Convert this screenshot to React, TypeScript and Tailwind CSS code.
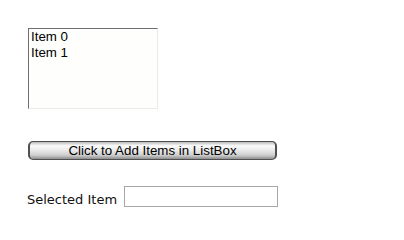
import { useState } from 'react'

const items = ['Item 0', 'Item 1']

function App() {
  const [selected, setSelected] = useState('')

  return (
    <div className="min-h-screen bg-white pl-[27px] pt-[28px] text-black">
      <div
        className="ml-px w-[130px] h-[81px] bg-[#fefefc] border-t border-l border-t-[#6e6e6e] border-l-[#6e6e6e] border-r border-b border-r-[#ecebe6] border-b-[#ecebe6] pl-[2px] font-['Liberation_Sans',Arial,sans-serif] text-[13.33px] leading-[16px]"
      >
        {items.map((item) => (
          <div key={item} onClick={() => setSelected(item)} className="cursor-default">
            {item}
          </div>
        ))}
      </div>

      <button
        type="button"
        className="ml-px mt-[32px] block w-[249px] h-[19px] rounded-[5px] border border-x-2 border-[#505050] bg-[linear-gradient(to_bottom,#b9b9b9_0%,#fbfbfb_22%,#e9e9e9_50%,#cdcdcd_78%,#8e8e8e_100%)] font-['Liberation_Sans',Arial,sans-serif] text-[13.33px] leading-[14px] text-black"
      >
        Click to Add Items in ListBox
      </button>

      <div className="mt-[26px] flex items-start">
        <span className="pt-[3px] font-['DejaVu_Sans',Verdana,sans-serif] text-[13px] leading-[21px] text-[#111]">
          Selected Item
        </span>
        <input
          value={selected}
          onChange={(e) => setSelected(e.target.value)}
          className="ml-[7px] w-[154px] h-[21px] border border-[#a7a7a7] bg-white px-1 text-[13px] outline-none"
        />
      </div>
    </div>
  )
}

export default App
